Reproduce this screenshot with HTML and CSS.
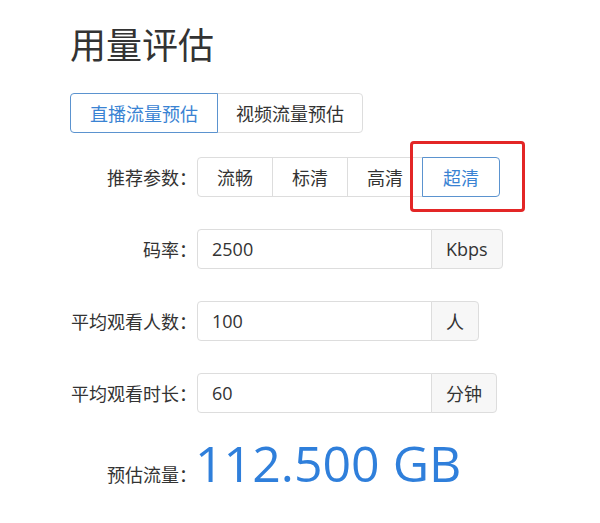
FILE: index.html
```html
<!DOCTYPE html>
<html lang="zh-CN">
<head>
    <meta charset="UTF-8">
    <meta name="viewport" content="width=device-width, initial-scale=1.0">
    <title>用量评估</title>
    <link rel="stylesheet" href="styles.css">
</head>
<body>
    <div class="page">
        <h1 class="title">用量评估</h1>

        <div class="tabs">
            <button class="tab active">直播流量预估</button>
            <button class="tab">视频流量预估</button>
        </div>

        <div class="form">
            <div class="row">
                <label class="label">推荐参数：</label>
                <div class="btn-group">
                    <button class="btn">流畅</button>
                    <button class="btn">标清</button>
                    <button class="btn">高清</button>
                    <button class="btn active marked">超清</button>
                </div>
            </div>

            <div class="row">
                <label class="label">码率：</label>
                <div class="input-group">
                    <input class="input" type="text" value="2500">
                    <span class="addon">Kbps</span>
                </div>
            </div>

            <div class="row">
                <label class="label">平均观看人数：</label>
                <div class="input-group">
                    <input class="input" type="text" value="100">
                    <span class="addon">人</span>
                </div>
            </div>

            <div class="row">
                <label class="label">平均观看时长：</label>
                <div class="input-group">
                    <input class="input" type="text" value="60">
                    <span class="addon">分钟</span>
                </div>
            </div>

            <div class="result">
                <span class="label">预估流量：</span>
                <span class="total">112.500 GB</span>
            </div>
        </div>
    </div>
</body>
</html>
```

FILE: styles.css
```css
body {
    margin: 0;
    padding: 0;
    background-color: #fff;
    color: #333;
    font-family: "Open Sans", "Noto Sans CJK SC", sans-serif;
}

.page {
    padding: 22px 0 0 70px;
}

.title {
    margin: 0 0 23px;
    font-size: 36px;
    font-weight: normal;
    line-height: 48px;
    color: #333;
}

/* Tabs at the top */
.tabs {
    display: flex;
    margin-bottom: 24px;
}

.tab {
    height: 40px;
    padding: 0 18px;
    font-family: inherit;
    font-size: 18px;
    color: #333;
    background-color: #fff;
    border: 1px solid #ddd;
    cursor: pointer;
}

.tab:first-child {
    border-radius: 4px 0 0 4px;
}

.tab:last-child {
    border-radius: 0 4px 4px 0;
    margin-left: -1px;
}

.tab.active {
    position: relative;
    padding: 0 19px;
    color: #3a83d3;
    border-color: #5b93cf;
}

/* Form rows */
.form {
    display: flex;
    flex-direction: column;
    gap: 32px;
}

.row {
    display: flex;
    align-items: center;
}

.label {
    width: 127px;
    font-size: 18px;
    text-align: right;
    color: #333;
    flex-shrink: 0;
}

.btn-group {
    display: flex;
}

.btn {
    height: 40px;
    padding: 0 19px;
    margin-left: -1px;
    font-family: inherit;
    font-size: 18px;
    color: #333;
    background-color: #fff;
    border: 1px solid #ddd;
    cursor: pointer;
}

.btn:first-child {
    margin-left: 0;
    border-radius: 4px 0 0 4px;
}

.btn:last-child {
    border-radius: 0 4px 4px 0;
}

.btn.active {
    position: relative;
    padding: 0 20px;
    color: #3a83d3;
    border-color: #5b93cf;
}

/* Red annotation box around the selected option */
.marked::after {
    content: "";
    position: absolute;
    top: -17px;
    bottom: -16px;
    left: -13px;
    right: -26px;
    border: 3px solid #e32626;
    border-radius: 4px;
}

.input-group {
    display: flex;
    height: 40px;
}

.input {
    width: 235px;
    box-sizing: border-box;
    padding: 0 14px;
    font-family: inherit;
    font-size: 18px;
    color: #333;
    border: 1px solid #ddd;
    border-radius: 4px 0 0 4px;
    outline: none;
}

.addon {
    display: flex;
    align-items: center;
    padding: 0 14px;
    margin-left: -1px;
    font-size: 18px;
    color: #333;
    background-color: #f7f7f7;
    border: 1px solid #ddd;
    border-radius: 0 4px 4px 0;
}

/* Result line */
.result {
    display: flex;
    align-items: baseline;
    margin-top: -12px;
}

.total {
    margin-left: -2px;
    font-size: 50px;
    line-height: 60px;
    color: #2f7fdb;
}
```
